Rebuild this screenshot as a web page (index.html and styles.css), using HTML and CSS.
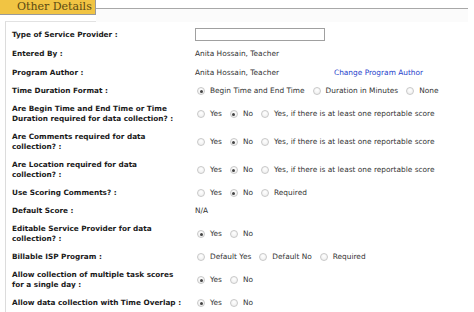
FILE: index.html
```html
<!DOCTYPE html>
<html>
<head>
<meta charset="utf-8">
<link rel="stylesheet" href="styles.css">
</head>
<body>
<div class="panel">
  <div class="head">
    <div class="tab">Other Details</div>
    <div class="rule"></div>
  </div>
  <div class="box">
    <div class="row">
      <div class="lbl">Type of Service Provider :</div>
      <div class="val"><span class="input"></span></div>
    </div>
    <div class="row">
      <div class="lbl">Entered By :</div>
      <div class="val">Anita Hossain, Teacher</div>
    </div>
    <div class="row">
      <div class="lbl">Program Author :</div>
      <div class="val"><span class="author">Anita Hossain, Teacher</span><a class="link">Change Program Author</a></div>
    </div>
    <div class="row">
      <div class="lbl">Time Duration Format :</div>
      <div class="val"><span class="r on"></span>Begin Time and End Time<span class="r"></span>Duration in Minutes<span class="r"></span>None</div>
    </div>
    <div class="row">
      <div class="lbl">Are Begin Time and End Time or Time Duration required for data collection? :</div>
      <div class="val"><span class="r"></span>Yes<span class="r on"></span>No<span class="r"></span>Yes, if there is at least one reportable score</div>
    </div>
    <div class="row">
      <div class="lbl">Are Comments required for data collection? :</div>
      <div class="val"><span class="r"></span>Yes<span class="r on"></span>No<span class="r"></span>Yes, if there is at least one reportable score</div>
    </div>
    <div class="row">
      <div class="lbl">Are Location required for data<br>collection? :</div>
      <div class="val"><span class="r"></span>Yes<span class="r on"></span>No<span class="r"></span>Yes, if there is at least one reportable score</div>
    </div>
    <div class="row">
      <div class="lbl">Use Scoring Comments? :</div>
      <div class="val"><span class="r"></span>Yes<span class="r on"></span>No<span class="r"></span>Required</div>
    </div>
    <div class="row">
      <div class="lbl">Default Score :</div>
      <div class="val">N/A</div>
    </div>
    <div class="row">
      <div class="lbl">Editable Service Provider for data collection? :</div>
      <div class="val"><span class="r on"></span>Yes<span class="r"></span>No</div>
    </div>
    <div class="row">
      <div class="lbl">Billable ISP Program :</div>
      <div class="val"><span class="r"></span>Default Yes<span class="r"></span>Default No<span class="r"></span>Required</div>
    </div>
    <div class="row">
      <div class="lbl">Allow collection of multiple task scores for a single day :</div>
      <div class="val"><span class="r on"></span>Yes<span class="r"></span>No</div>
    </div>
    <div class="row">
      <div class="lbl">Allow data collection with Time Overlap :</div>
      <div class="val"><span class="r on"></span>Yes<span class="r"></span>No</div>
    </div>
  </div>
</div>
</body>
</html>
```
FILE: styles.css
```css
html, body {
  margin: 0;
  padding: 0;
  background: #ffffff;
}
body {
  font-family: "DejaVu Sans", Verdana, sans-serif;
  font-size: 7px;
  color: #222222;
  width: 474px;
  height: 312px;
  overflow: hidden;
}
.panel {
  width: 468px;
}
.head {
  display: flex;
  align-items: flex-start;
  height: 21px;
}
.tab {
  width: 96px;
  height: 15px;
  background: #f1c443;
  border-right: 1px solid #9a9a9a;
  border-bottom: 1px solid #9a9a9a;
  font-family: "DejaVu Serif", "Liberation Serif", serif;
  font-size: 11px;
  color: #5b4a12;
  box-sizing: border-box;
  padding-left: 17px;
  line-height: 14px;
  flex: none;
}
.rule {
  flex: 1;
  height: 13px;
  margin-top: 8px;
  border-top: 1px solid #a8a8a8;
  background: #fbfbfb;
}
.box {
  margin-left: 5px;
  margin-right: 3px;
  border-left: 1px solid #dcdcdc;
  border-top: 1px solid #e2e2e2;
  padding: 3px 0 0 6px;
}
.row {
  display: flex;
  align-items: center;
  padding: 4px 0;
  min-height: 10px;
}
.row:nth-child(2), .row:nth-child(3) {
  padding: 4.5px 0;
}
.lbl {
  width: 175px;
  flex: none;
  font-weight: bold;
  font-size: 7.3px;
  line-height: 10px;
  color: #1a1a1a;
  padding-right: 8px;
}
.val {
  display: flex;
  align-items: center;
  line-height: 10px;
  font-size: 7.4px;
  color: #333333;
  white-space: nowrap;
}
.input {
  display: block;
  width: 128px;
  height: 11px;
  border: 1px solid #a0a0a0;
  background: #fff;
  margin: -1px 0;
}
.author {
  width: 139px;
}
.link {
  color: #1f3fcc;
}
.r {
  width: 6px;
  height: 6px;
  border-radius: 50%;
  border: 1px solid #c8c8c8;
  background: radial-gradient(circle at 50% 35%, #ffffff 0%, #ebebeb 100%);
  margin: 0 5px 0 2px;
  position: relative;
  flex: none;
}
.val .r ~ .r {
  margin-left: 8px;
}
.r.on::after {
  content: "";
  position: absolute;
  left: 1.5px;
  top: 1.5px;
  width: 3px;
  height: 3px;
  border-radius: 50%;
  background: #444444;
}
```
